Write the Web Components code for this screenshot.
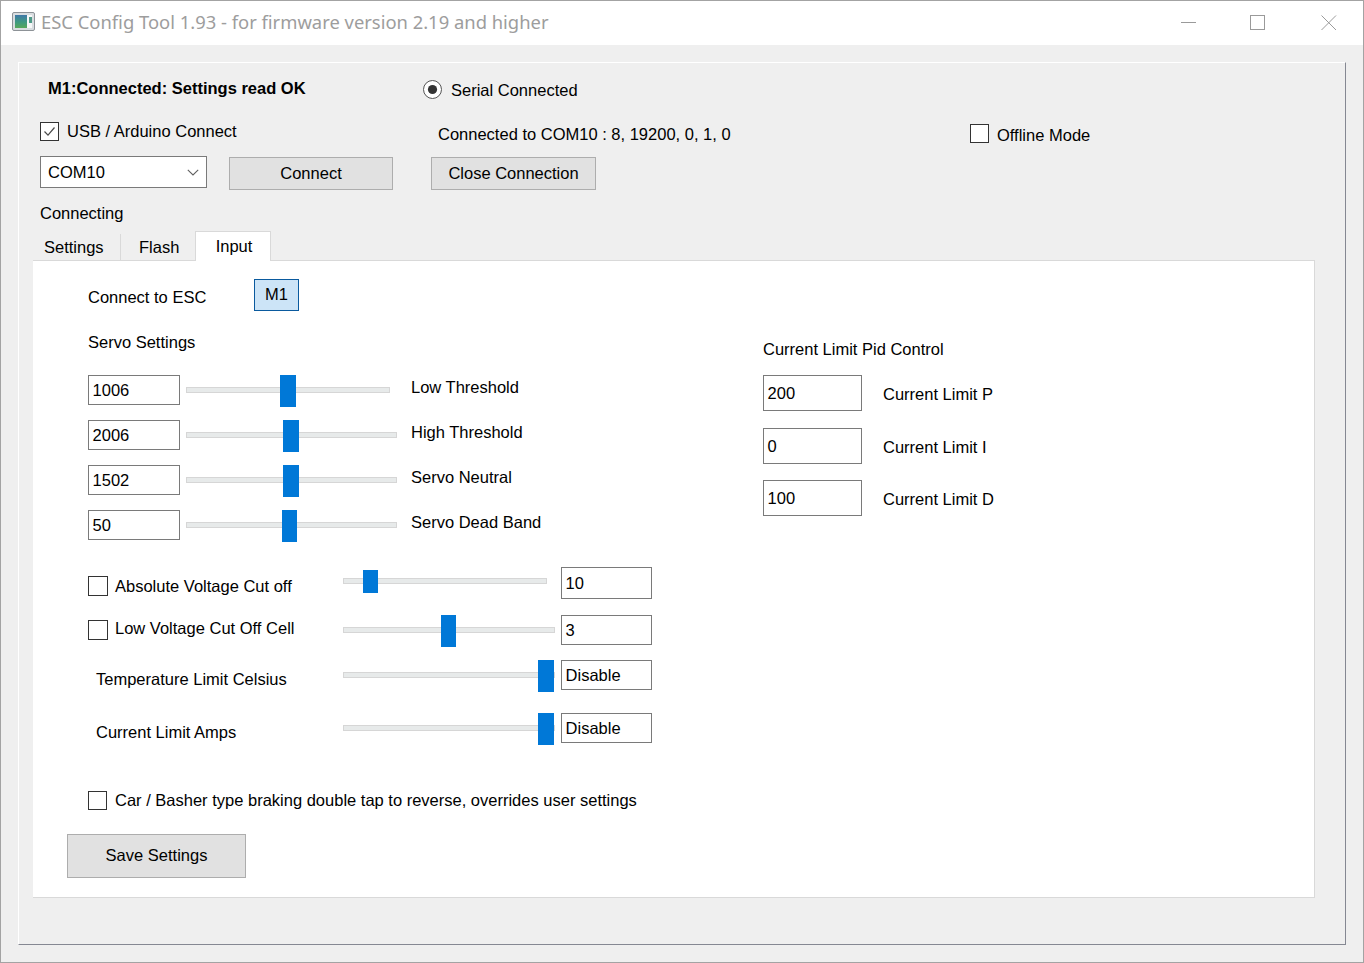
<!DOCTYPE html>
<html lang="en">
<head>
<meta charset="utf-8">
<title>ESC Config Tool</title>
<style>
html,body{margin:0;padding:0;background:#efefef}
body{font-family:"Liberation Sans",Arial,sans-serif;font-size:16.5px;color:#000}
</style>
</head>
<body>
<esc-window>
  <span slot="title">ESC Config Tool 1.93 - for firmware version 2.19 and higher</span>
  <esc-top></esc-top>
  <esc-tabs>
    <esc-input-page></esc-input-page>
  </esc-tabs>
</esc-window>

<script>
function def(name, css, html, extra){
  customElements.define(name, class extends HTMLElement{
    constructor(){
      super();
      const r=this.attachShadow({mode:'open'});
      const val=this.getAttribute('value')||'';
      r.innerHTML='<style>'+css+'</style>'+html.replace('%V%',val);
      if(extra) extra(this,r);
    }
  });
}

def('esc-window',`
:host{display:block;box-sizing:border-box;width:1364px;height:963px;border:1px solid #a3a3a3;background:#efefef;overflow:hidden}
.bar{display:flex;align-items:center;height:44px;background:#fff}
.ico{margin:0 0 2px 11px;flex:none;display:block}
.title{margin-left:5px;padding-bottom:4px;font:18.4px "Noto Sans","Open Sans",sans-serif;color:#9d9d9d;white-space:nowrap;flex:1}
.ctl{display:flex;align-items:center;flex:none;margin-right:26px;gap:54px}
.x{margin-left:1px}
svg{display:block}
.panel{box-sizing:border-box;margin:17px 17px 0;width:1328px;height:883px;border:1px solid #fff;border-right-color:#858892;border-bottom-color:#858892}
`,`
<div class="bar">
  <svg class="ico" width="24" height="20" viewBox="0 0 24 20">
    <defs><linearGradient id="g" x1="0" y1="0" x2="0" y2="1"><stop offset="0" stop-color="#3f78a8"/><stop offset=".55" stop-color="#3e9a80"/><stop offset="1" stop-color="#57a85a"/></linearGradient></defs>
    <rect x=".5" y=".5" width="22" height="18" rx="1.5" fill="#d9dde0" stroke="#8d9297"/>
    <rect x="3" y="3" width="12" height="13" fill="url(#g)"/>
    <rect x="15" y="3" width="5" height="13" fill="#f6f8f8"/>
    <rect x="17" y="5" width="3" height="6" fill="#4f9a88"/>
  </svg>
  <div class="title"><slot name="title"></slot></div>
  <div class="ctl">
    <svg width="15" height="16" viewBox="0 0 15 16"><path d="M0 7.5H15" stroke="#9a9a9a"/></svg>
    <svg width="16" height="16" viewBox="0 0 16 16"><rect x=".5" y=".5" width="14" height="14" fill="none" stroke="#9a9a9a"/></svg>
    <svg class="x" width="16" height="16" viewBox="0 0 16 16"><path d="M.5 .5L15 15M15 .5L.5 15" stroke="#9a9a9a" fill="none"/></svg>
  </div>
</div>
<div class="panel"><slot></slot></div>`);

def('esc-label',`
:host{display:block;line-height:20px;white-space:nowrap}
`,`<slot></slot>`);

def('esc-check',`
:host{display:flex;align-items:center;gap:var(--g,8px);line-height:20px;white-space:nowrap}
.b{box-sizing:border-box;width:var(--b,19px);height:var(--b,19px);border:1px solid #333;background:#fff;flex:none}
svg{display:block}
::slotted(span){margin-bottom:var(--up,0)}
`,`<div class="b"></div><slot></slot>`,(el,r)=>{
  if(el.hasAttribute('checked')){
    r.querySelector('.b').innerHTML='<svg width="17" height="17" viewBox="0 0 17 17"><path d="M3.5 8.5L7 12.2L13.5 4.5" fill="none" stroke="#4a4a4a" stroke-width="1.2"/></svg>';
  }
});

def('esc-radio',`
:host{display:flex;align-items:flex-start;gap:9px;line-height:20px;white-space:nowrap}
svg{display:block;flex:none}
`,`<svg width="19" height="19" viewBox="0 0 19 19"><circle cx="9.5" cy="9.5" r="9" fill="#fff" stroke="#555"/><circle cx="9.5" cy="9.5" r="4.6" fill="#333"/></svg><slot></slot>`);

def('esc-btn',`
:host{display:flex;align-items:center;justify-content:center;box-sizing:border-box;background:#e1e1e1;border:1px solid #adadad;white-space:nowrap}
`,`<slot></slot>`);

def('esc-combo',`
:host{display:flex;align-items:center;box-sizing:border-box;width:167px;height:32px;background:#fff;border:1px solid #7a7a7a;padding-left:7px}
.t{flex:1}
svg{display:block;margin-right:7px}
`,`<div class="t"><slot></slot></div><svg width="12" height="7" viewBox="0 0 12 7"><path d="M.8 .8L6 6L11.2 .8" fill="none" stroke="#606060" stroke-width="1.1"/></svg>`);

def('esc-field',`
:host{display:flex;align-items:center;box-sizing:border-box;width:var(--w,92px);height:var(--h,30px);background:#fff;border:1px solid #7a7a7a;padding-left:3.6px;white-space:nowrap}
`,`%V%`);

def('esc-slider',`
:host{display:block;position:relative;width:var(--w);height:32px}
.track{box-sizing:border-box;height:6px;margin-top:var(--tt,12px);background:#e7eaea;border:1px solid #d6d6d6}
.thumb{position:absolute;top:0;left:var(--x);width:var(--tw,16px);height:var(--th,32px);background:#0078d7}
`,`<div class="track"></div><div class="thumb"></div>`);

def('esc-servo',`
:host{display:grid;grid-template-columns:98px 225px 1fr;height:45px}
esc-slider{--w:var(--sw)}
.l{margin-top:2px}
`,`<esc-field value="%V%"></esc-field><esc-slider></esc-slider><esc-label class="l"><slot></slot></esc-label>`);

def('esc-top',`
:host{display:block}
.g{display:grid;grid-template-columns:404px 547px 1fr;grid-template-rows:47px 46px 34px;align-items:start}
.m{margin:15px 0 0 29px;font-weight:bold;font-size:16.5px}
.rad{margin-top:17px}
.usb{margin:11px 0 0 21px}
.con{margin:14px 0 0 15px}
.off{margin-top:14px;--up:-2px}
.r3{display:flex;margin-left:21px}
.c{width:164px;height:33px;margin:1px 0 0 22px}
.cl{width:165px;height:33px;margin:1px 0 0 8px}
.st{margin:13px 0 0 21px}
`,`
<div class="g">
  <esc-label class="m">M1:Connected: Settings read OK</esc-label>
  <esc-radio class="rad">Serial Connected</esc-radio>
  <div></div>
  <esc-check class="usb" checked>USB / Arduino Connect</esc-check>
  <esc-label class="con">Connected to COM10 : 8, 19200, 0, 1, 0</esc-label>
  <esc-check class="off"><span>Offline Mode</span></esc-check>
  <div class="r3"><esc-combo>COM10</esc-combo><esc-btn class="c">Connect</esc-btn></div>
  <esc-btn class="cl">Close Connection</esc-btn>
  <div></div>
</div>
<esc-label class="st">Connecting</esc-label>`);

def('esc-tabs',`
:host{display:block;margin:8px 0 0 14px;width:1282px}
.strip{display:flex;height:30px;box-sizing:border-box;align-items:flex-end;border-bottom:1px solid #d9d9d9}
.t{box-sizing:border-box;height:26px;line-height:26px}
.a{box-sizing:border-box;height:30px;width:76px;padding-left:2px;background:#fff;border:1px solid #d9d9d9;border-bottom:0;margin-bottom:-1px;text-align:center;line-height:29px}
.s{width:88px;padding-left:11px;border-right:1px solid #d9d9d9}
.f{width:74px;padding-left:18px}
.page{background:#fff;border-right:1px solid #d9d9d9;border-bottom:1px solid #d9d9d9;box-sizing:border-box;height:637px}
`,`
<div class="strip">
  <div class="t s">Settings</div>
  <div class="t f">Flash</div>
  <div class="a">Input</div>
</div>
<div class="page"><slot></slot></div>`);

def('esc-input-page',`
:host{display:grid;grid-template-columns:730px 1fr}
.left{padding:18px 0 0 55px}
.r0{display:grid;grid-template-columns:166px 45px;height:32px}
.r0 esc-label{margin-top:8px}
.m1{width:45px;height:32px;padding-bottom:2px;background:#cce4f7;border-color:#0a5a9e}
.ss{margin:21px 0 23px}
.v{display:grid;grid-template-columns:255px 218px 91px;align-items:start}
.v1{height:48px;margin-top:12px}
.v2{height:45px}
.v3{height:53px}
.v4{height:46px}
.lb{margin:9px 0 0 8px}
.car{margin:31px 0 24px}
.save{width:179px;height:44px;margin-left:-21px;padding-bottom:2px}
.right{padding-top:78px}
.rr{display:grid;grid-template-columns:120px 1fr}
.rr esc-field{--w:99px;--h:36px}
.pid{margin-bottom:16px}
`,`
<div class="left">
  <div class="r0"><esc-label>Connect to ESC</esc-label><esc-btn class="m1">M1</esc-btn></div>
  <esc-label class="ss">Servo Settings</esc-label>
  <esc-servo value="1006" style="--sw:204px;--x:94px">Low Threshold</esc-servo>
  <esc-servo value="2006" style="--sw:211px;--x:97px">High Threshold</esc-servo>
  <esc-servo value="1502" style="--sw:211px;--x:97px">Servo Neutral</esc-servo>
  <esc-servo value="50" style="--sw:211px;--x:96px;--tw:15px">Servo Dead Band</esc-servo>

  <div class="v v1">
    <esc-check style="--b:20px;--g:7px;margin-top:9px">Absolute Voltage Cut off</esc-check>
    <esc-slider style="--w:204px;--x:20px;--tw:15px;--th:23px;--tt:8px;margin-top:3px"></esc-slider>
    <esc-field value="10" style="--w:91px;--h:32px"></esc-field>
  </div>
  <div class="v v2">
    <esc-check style="--b:20px;--g:7px;--up:3px;margin-top:3px"><span>Low Voltage Cut Off Cell</span></esc-check>
    <esc-slider style="--w:212px;--x:98px;--tw:15px"></esc-slider>
    <esc-field value="3" style="--w:91px"></esc-field>
  </div>
  <div class="v v3">
    <esc-label class="lb">Temperature Limit Celsius</esc-label>
    <esc-slider style="--w:212px;--x:195px"></esc-slider>
    <esc-field value="Disable" style="--w:91px"></esc-field>
  </div>
  <div class="v v4">
    <esc-label class="lb">Current Limit Amps</esc-label>
    <esc-slider style="--w:212px;--x:195px"></esc-slider>
    <esc-field value="Disable" style="--w:91px"></esc-field>
  </div>
  <esc-check class="car">Car / Basher type braking double tap to reverse, overrides user settings</esc-check>
  <esc-btn class="save">Save Settings</esc-btn>
</div>
<div class="right">
  <esc-label class="pid">Current Limit Pid Control</esc-label>
  <div class="rr" style="height:53px"><esc-field value="200"></esc-field><esc-label style="margin-top:9px">Current Limit P</esc-label></div>
  <div class="rr" style="height:52px"><esc-field value="0"></esc-field><esc-label style="margin-top:9px">Current Limit I</esc-label></div>
  <div class="rr"><esc-field value="100"></esc-field><esc-label style="margin-top:9px">Current Limit D</esc-label></div>
</div>`);
</script>
</body>
</html>
